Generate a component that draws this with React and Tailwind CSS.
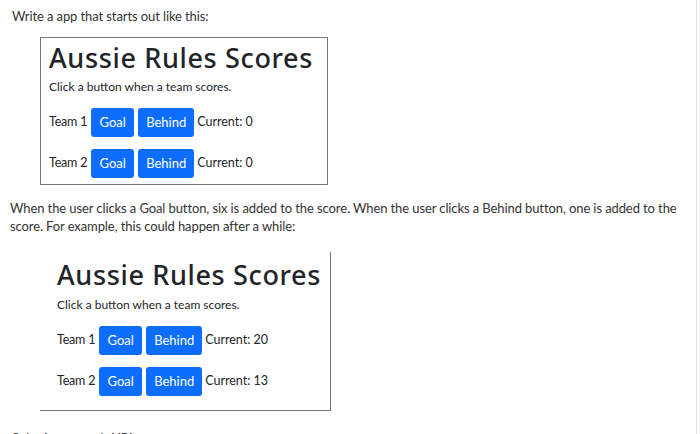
import React, { useState } from "react";

function ScoreRow({ label, score, onGoal, onBehind }) {
  return (
    <div className="flex items-center h-[29px] shrink-0">
      <span className="mr-[4px] tracking-[-0.2px]">{label}</span>
      <button
        onClick={onGoal}
        className="h-[29px] w-[43px] rounded-[3px] bg-[#0d6efd] text-white text-[13px] mr-[4px]"
      >
        Goal
      </button>
      <button
        onClick={onBehind}
        className="h-[29px] w-[56px] rounded-[3px] bg-[#0d6efd] text-white text-[13px] mr-[3px]"
      >
        Behind
      </button>
      <span>Current: {score}</span>
    </div>
  );
}

function ScoreBox({ initial, className, subMt }) {
  const [s1, setS1] = useState(initial[0]);
  const [s2, setS2] = useState(initial[1]);
  return (
    <div className={className}>
      <h1 className="font-['Noto_Sans',sans-serif] font-medium text-[27px] leading-[31px] text-[#212529] tracking-[0.65px]">
        Aussie Rules Scores
      </h1>
      <p className={subMt + " text-[12px] leading-[16px]"}>Click a button when a team scores.</p>
      <div className="mt-[13px] flex flex-col gap-[12px]">
        <ScoreRow label="Team 1" score={s1} onGoal={() => setS1(s1 + 6)} onBehind={() => setS1(s1 + 1)} />
        <ScoreRow label="Team 2" score={s2} onGoal={() => setS2(s2 + 6)} onBehind={() => setS2(s2 + 1)} />
      </div>
    </div>
  );
}

export default function App() {
  return (
    <div className="w-[700px] h-[434px] overflow-hidden bg-white flex font-['Lato',sans-serif] text-[#333]">
      <div className="flex-1 flex flex-col pl-[12px]">
        <p className="shrink-0 mt-[7px] text-[13px] leading-[18px] tracking-[-0.1px]">Write a app that starts out like this:</p>
        <ScoreBox
          initial={[0, 0]}
          subMt="mt-[6px]"
          className="shrink-0 ml-[28px] mt-[12px] w-[288px] h-[148px] border border-[#777] pl-[8px] pt-[4px] text-[12.5px] text-[#212529]"
        />
        <p className="shrink-0 mt-[14px] text-[13px] leading-[18px] pr-[10px] -ml-[2px] tracking-[-0.1px]">
          When the user clicks a Goal button, six is added to the score. When the user clicks a Behind button, one is added to the score. For example, this could happen after a while:
        </p>
        <ScoreBox
          initial={[20, 13]}
          subMt="mt-[7px]"
          className="shrink-0 ml-[28px] mt-[17px] w-[291px] h-[159px] border-r border-b border-[#777] pl-[17px] pt-[7px] text-[12.5px] text-[#212529]"
        />
        <p className="shrink-0 mt-[18px] text-[13px] leading-[18px]">Submit your web URL:</p>
      </div>
      <div className="w-px bg-[#e0e0e0] mr-[3px]"></div>
    </div>
  );
}
